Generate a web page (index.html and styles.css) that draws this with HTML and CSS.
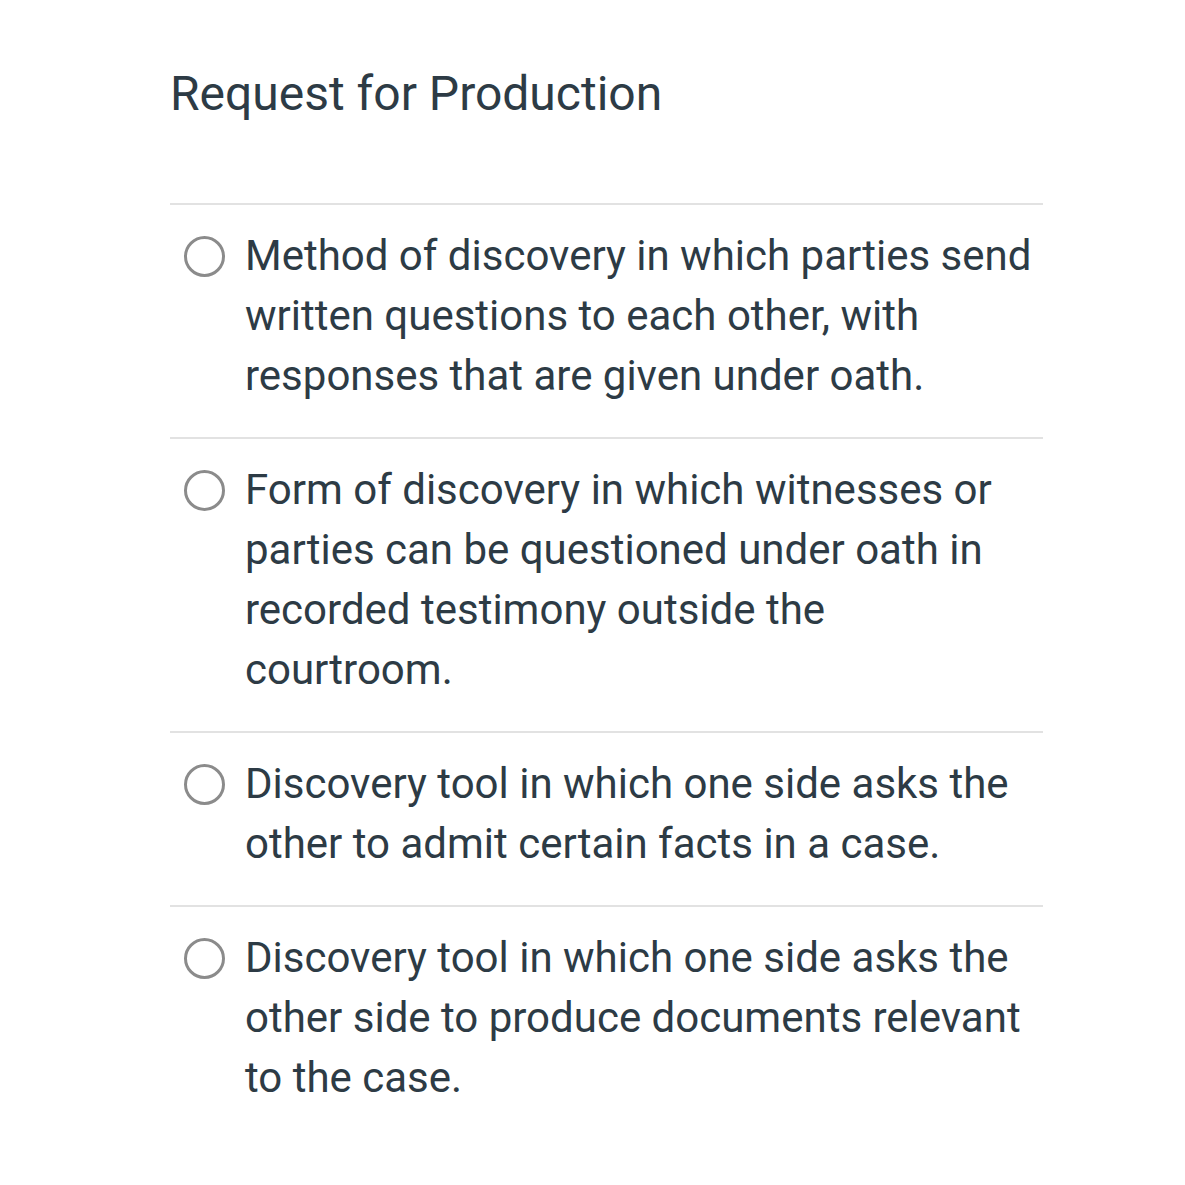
FILE: index.html
```html
<!DOCTYPE html>
<html lang="en">
<head>
<meta charset="utf-8">
<title>Request for Production</title>
<link rel="stylesheet" href="styles.css">
</head>
<body>
<main class="page">
  <h1 class="title">Request for Production</h1>
  <div class="options">
    <label class="option">
      <span class="radio"></span>
      <span class="text">Method of discovery in which parties send written questions to each other, with responses that are given under oath.</span>
    </label>
    <label class="option">
      <span class="radio"></span>
      <span class="text">Form of discovery in which witnesses or parties can be questioned under oath in recorded testimony outside the courtroom.</span>
    </label>
    <label class="option">
      <span class="radio"></span>
      <span class="text">Discovery tool in which one side asks the other to admit certain facts in a case.</span>
    </label>
    <label class="option">
      <span class="radio"></span>
      <span class="text">Discovery tool in which one side asks the other side to produce documents relevant to the case.</span>
    </label>
  </div>
</main>
</body>
</html>
```

FILE: styles.css
```css
html, body {
  margin: 0;
  padding: 0;
  background: #ffffff;
}

body {
  font-family: Roboto, "Liberation Sans", Arial, sans-serif;
  color: #2d3b45;
}

.page {
  width: 873px;
  padding: 65px 0 0 170px;
}

.title {
  margin: 0 0 80px;
  font-size: 48px;
  font-weight: 400;
  line-height: 1.2;
  color: #2d3b45;
}

.options {
  display: flex;
  flex-direction: column;
}

.option {
  display: flex;
  align-items: flex-start;
  gap: 20px;
  padding: 21px 0 31px 14px;
  border-top: 2px solid #e2e2e2;
}

.radio {
  flex: none;
  box-sizing: border-box;
  width: 41px;
  height: 41px;
  margin-top: 10px;
  border: 3.5px solid #8b8b8b;
  border-radius: 50%;
}

.text {
  font-size: 42px;
  line-height: 60px;
}
```
